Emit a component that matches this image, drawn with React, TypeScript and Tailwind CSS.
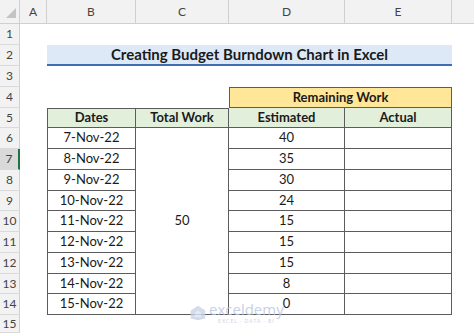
const cols = ['A', 'B', 'C', 'D', 'E'];
const rows = Array.from({ length: 15 }, (_, i) => i + 1);

const data = [
  { date: '7-Nov-22', est: '40' },
  { date: '8-Nov-22', est: '35' },
  { date: '9-Nov-22', est: '30' },
  { date: '10-Nov-22', est: '24' },
  { date: '11-Nov-22', est: '15' },
  { date: '12-Nov-22', est: '15' },
  { date: '13-Nov-22', est: '15' },
  { date: '14-Nov-22', est: '8' },
  { date: '15-Nov-22', est: '0' },
];

// grid rows: sheet row n lives on grid row n + 1
const rowStart = [
  'row-start-2', 'row-start-3', 'row-start-4', 'row-start-5', 'row-start-6',
  'row-start-7', 'row-start-8', 'row-start-9', 'row-start-10', 'row-start-11',
  'row-start-12', 'row-start-13', 'row-start-14', 'row-start-15', 'row-start-16',
];
const colStart = ['col-start-2', 'col-start-3', 'col-start-4', 'col-start-5', 'col-start-6'];

const cell = 'flex items-center justify-center border-[#5c5c5c]';

export default function App() {
  return (
    <div
      className="relative w-[474px] h-[333px] overflow-hidden bg-white text-[#1a1a1a]"
      style={{ fontFamily: 'Lato, "Open Sans", sans-serif' }}
    >
      <div className="grid grid-cols-[20px_27px_89px_93px_116px_107px_22px] grid-rows-[24px_21px_21px_21px_21px_20px_21px_21px_21px_20px_21px_21px_21px_20px_21px_18px]">
        {/* Corner */}
        <div className="col-start-1 row-start-1 bg-[#f2f2f2] border-r border-b border-[#d0d0d0] flex items-end justify-end pr-[3px] pb-[5px]">
          <svg width="10" height="10" viewBox="0 0 10 10">
            <path d="M10 0 L10 10 L0 10 Z" fill="#c4c4c4" />
          </svg>
        </div>

        {/* Column headers */}
        {cols.map((c, i) => (
          <div
            key={c}
            className={`${colStart[i]} row-start-1 bg-[#f2f2f2] border-r border-b border-[#d0d0d0] flex items-center justify-center text-[12px] text-[#444]`}
          >
            {c}
          </div>
        ))}
        <div className="col-start-7 row-start-1 bg-[#f2f2f2] border-b border-[#d0d0d0]" />

        {/* Row headers */}
        {rows.map((r, i) => (
          <div
            key={r}
            className={`col-start-1 ${rowStart[i]} flex items-center justify-center text-[12px] text-[#444] border-b border-[#dadada] ${
              r === 7 ? 'bg-[#d9d9d9] border-r-2 border-r-[#217346]' : 'bg-[#f2f2f2] border-r border-r-[#d0d0d0]'
            }`}
          >
            {r}
          </div>
        ))}

        {/* Title */}
        <div className="col-start-3 col-end-7 row-start-3 bg-[#dde9f6] border-b-2 border-[#3e6db5] flex items-center justify-center text-[15px] font-bold">
          Creating Budget Burndown Chart in Excel
        </div>

        {/* Remaining Work */}
        <div className={`col-start-5 col-end-7 row-start-5 bg-[#ffe699] border ${cell} text-[13px] font-bold`}>
          Remaining Work
        </div>

        {/* Column titles */}
        <div className={`col-start-3 row-start-6 bg-[#e2efda] border-l border-t border-r border-b ${cell} text-[13px] font-bold`}>
          Dates
        </div>
        <div className={`col-start-4 row-start-6 bg-[#e2efda] border-t border-r border-b ${cell} text-[13px] font-bold`}>
          Total Work
        </div>
        <div className={`col-start-5 row-start-6 bg-[#e2efda] border-r border-b ${cell} text-[13px] font-bold`}>
          Estimated
        </div>
        <div className={`col-start-6 row-start-6 bg-[#e2efda] border-r border-b ${cell} text-[13px] font-bold`}>
          Actual
        </div>

        {/* Data */}
        {data.map((d, i) => (
          <div key={d.date} className={`col-start-3 ${rowStart[i + 5]} border-l border-r border-b ${cell} text-[13px]`}>
            {d.date}
          </div>
        ))}
        <div className={`col-start-4 row-start-7 row-end-16 border-r border-b ${cell} text-[13px]`}>50</div>
        {data.map((d, i) => (
          <div key={'e' + d.date} className={`col-start-5 ${rowStart[i + 5]} border-r border-b ${cell} text-[13px]`}>
            {d.est}
          </div>
        ))}
        {data.map((d, i) => (
          <div key={'a' + d.date} className={`col-start-6 ${rowStart[i + 5]} border-r border-b ${cell}`} />
        ))}
      </div>

      {/* Watermark */}
      <div className="absolute left-[190px] top-[302px] flex items-center gap-[3px] opacity-80 pointer-events-none">
        <svg width="16" height="16" viewBox="0 0 20 20">
          <path d="M10 1 L19 7 L19 17 L10 19 L1 17 L1 7 Z" fill="#c9d4e8" />
          <path d="M6 10 L10 7 L14 10 L14 15 L6 15 Z" fill="#dfe6f2" />
        </svg>
        <div className="flex flex-col items-center">
          <span className="text-[15px] leading-[14px] text-[#b9c6df]" style={{ fontFamily: '"Open Sans", sans-serif' }}>
            exceldemy
          </span>
          <span className="text-[5px] leading-[6px] text-[#c2cbe0] tracking-[1px] mt-[2px]">EXCEL · DATA · BI</span>
        </div>
      </div>
    </div>
  );
}
